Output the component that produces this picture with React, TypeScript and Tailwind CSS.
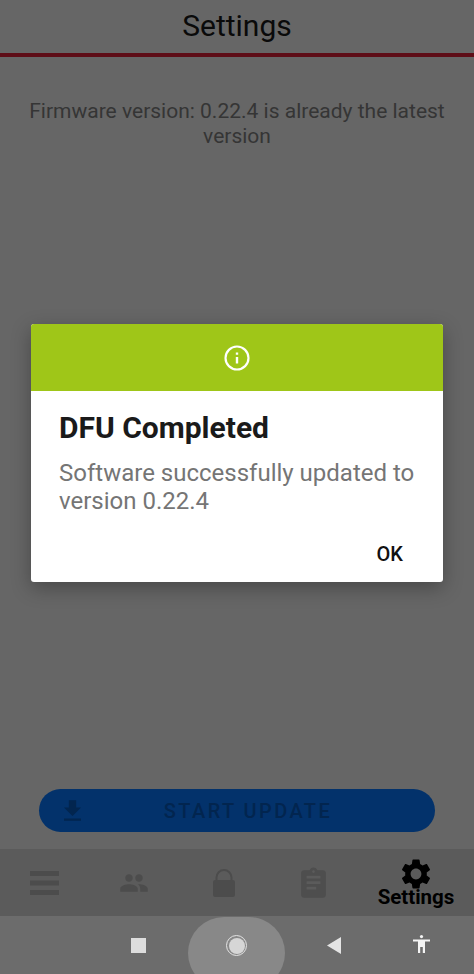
function HamburgerIcon() {
  return (
    <svg viewBox="0 0 29 24" className="w-[29px] h-[24px]" fill="#4c4c4c">
      <rect x="0" y="0" width="29" height="5" />
      <rect x="0" y="9.5" width="29" height="5" />
      <rect x="0" y="19" width="29" height="5" />
    </svg>
  );
}

function PeopleIcon() {
  return (
    <svg viewBox="0 0 24 24" className="w-[30px] h-[30px]" fill="#4c4c4c">
      <path d="M16 11c1.66 0 2.99-1.34 2.99-3S17.66 5 16 5c-1.66 0-3 1.34-3 3s1.34 3 3 3zm-8 0c1.66 0 2.99-1.34 2.99-3S9.66 5 8 5C6.34 5 5 6.34 5 8s1.34 3 3 3zm0 2c-2.33 0-7 1.17-7 3.5V19h14v-2.5c0-2.33-4.67-3.5-7-3.5zm8 0c-.29 0-.62.02-.97.05 1.16.84 1.97 1.97 1.97 3.45V19h6v-2.5c0-2.33-4.67-3.5-7-3.5z" />
    </svg>
  );
}

function LockIcon() {
  return (
    <svg viewBox="0 0 22 29" className="w-[22px] h-[29px]" fill="#4c4c4c">
      <path fillRule="evenodd" d="M2 29a2 2 0 0 1-2-2V14a2 2 0 0 1 2-2h.5V9.5a8.5 8.5 0 0 1 17 0V12h.5a2 2 0 0 1 2 2v13a2 2 0 0 1-2 2H2zM4.5 12h13V9.5a6.5 6.5 0 0 0-13 0V12z" />
    </svg>
  );
}

function ClipboardIcon() {
  return (
    <svg viewBox="0 0 24 24" className="w-[33px] h-[33px]" fill="#4e4e4e">
      <path d="M19 3h-4.18C14.4 1.84 13.3 1 12 1s-2.4.84-2.82 2H5c-1.1 0-2 .9-2 2v16c0 1.1.9 2 2 2h14c1.1 0 2-.9 2-2V5c0-1.1-.9-2-2-2zm-7 0c.55 0 1 .45 1 1s-.45 1-1 1-1-.45-1-1 .45-1 1-1zm2 14H7v-2h7v2zm3-4H7v-2h10v2zm0-4H7V7h10v2z" />
    </svg>
  );
}

function GearIcon() {
  return (
    <svg viewBox="0 0 24 24" className="w-[36px] h-[36px]" fill="#000000">
      <path d="M19.14 12.94c.04-.3.06-.61.06-.94 0-.32-.02-.64-.07-.94l2.03-1.58c.18-.14.23-.41.12-.61l-1.92-3.32c-.12-.22-.37-.29-.59-.22l-2.39.96c-.5-.38-1.03-.7-1.62-.94l-.36-2.54c-.04-.24-.24-.41-.48-.41h-3.84c-.24 0-.43.17-.47.41l-.36 2.54c-.59.24-1.13.57-1.62.94l-2.39-.96c-.22-.08-.47 0-.59.22L2.74 8.87c-.12.21-.08.47.12.61l2.03 1.58c-.05.3-.09.63-.09.94s.02.64.07.94l-2.03 1.58c-.18.14-.23.41-.12.61l1.92 3.32c.12.22.37.29.59.22l2.39-.96c.5.38 1.03.7 1.62.94l.36 2.54c.05.24.24.41.48.41h3.84c.24 0 .44-.17.47-.41l.36-2.54c.59-.24 1.13-.56 1.62-.94l2.39.96c.22.08.47 0 .59-.22l1.92-3.32c.12-.22.07-.47-.12-.61l-2.01-1.58zM12 15.6c-1.98 0-3.6-1.62-3.6-3.6s1.62-3.6 3.6-3.6 3.6 1.62 3.6 3.6-1.62 3.6-3.6 3.6z" />
    </svg>
  );
}

function DownloadIcon() {
  return (
    <svg viewBox="5 3 14 17" className="absolute left-[25px] top-[11px] w-[17px] h-[21px]" fill="#02254f">
      <path d="M19 9h-4V3H9v6H5l7 7 7-7zM5 18v2h14v-2H5z" />
    </svg>
  );
}

function InfoIcon() {
  return (
    <svg viewBox="0 0 24 24" className="w-[26px] h-[26px]" fill="none" stroke="#ffffff" strokeWidth="2">
      <circle cx="12" cy="12" r="10.6" />
      <path d="M12 11v6" strokeWidth="2.2" />
      <path d="M12 7v2" strokeWidth="2.2" />
    </svg>
  );
}

function AccessibilityIcon() {
  return (
    <svg viewBox="0 0 17 18" className="w-[17px] h-[18px]" fill="#f4f4f4">
      <circle cx="8.5" cy="1.6" r="1.6" />
      <path d="M0 4.5h17v2h-5V18h-2.2v-6H7.2v6H5V6.5H0z" />
    </svg>
  );
}

export default function App() {
  return (
    <div className="relative w-[474px] h-[974px] overflow-hidden flex flex-col bg-[#666666] font-['Roboto',sans-serif]">
      {/* Header */}
      <div className="h-[53px] pb-[3px] flex items-center justify-center text-[30px] text-[#0a0a0a]">Settings</div>
      <div className="h-[4px] bg-[#5e0d17]" />

      <div className="flex-1 flex flex-col">
        <p className="mt-[42px] px-[24px] text-center text-[21px] leading-[25px] text-[#353535]">
          Firmware version: 0.22.4 is already the latest version
        </p>
      </div>

      {/* Start update button */}
      <div className="px-[39px] pb-[17px]">
        <div className="relative h-[43px] rounded-[22px] bg-[#03326b] flex items-center justify-center pl-[22px] text-[#02254f] text-[20px] font-medium tracking-[2.4px]">
          <DownloadIcon />
          START UPDATE
        </div>
      </div>

      {/* Tab bar */}
      <div className="h-[67px] bg-[#5b5b5b] flex items-center">
        <div className="w-[89.5px] flex justify-center"><HamburgerIcon /></div>
        <div className="w-[89.5px] flex justify-center"><PeopleIcon /></div>
        <div className="w-[89.5px] flex justify-center"><LockIcon /></div>
        <div className="w-[89.5px] flex justify-center"><ClipboardIcon /></div>
        <div className="flex-1 self-start pt-[7px] flex flex-col items-center text-black text-[20.5px] leading-[20px] font-bold">
          <GearIcon />
          <span className="-mt-[5px]">Settings</span>
        </div>
      </div>

      {/* Android nav bar */}
      <div className="relative h-[58px] bg-[#6c6c6c]">
        <div className="absolute left-[188px] top-[1px] w-[97px] h-[72px] rounded-[36px] bg-[#888888]" />
        <div className="absolute left-[131px] top-[22px] w-[15px] h-[15px] bg-[#dddddd]" />
        <div className="absolute left-[226px] top-[19px] w-[21px] h-[21px] rounded-full border-[1.5px] border-[#e4e4e4] p-[1.5px]">
          <div className="w-full h-full rounded-full bg-[#d6d6d6]" />
        </div>
        <svg viewBox="0 0 14 17" className="absolute left-[327px] top-[21px] w-[14px] h-[17px]" fill="#e4e4e4">
          <path d="M14 0v17L0 8.5z" />
        </svg>
        <div className="absolute left-[413px] top-[19px] flex"><AccessibilityIcon /></div>
      </div>

      {/* Dialog */}
      <div className="absolute left-[31px] top-[324px] w-[412px] h-[258px] rounded-[3px] bg-white overflow-hidden shadow-[0_6px_20px_rgba(0,0,0,0.3)]">
        <div className="h-[67px] bg-[#9fc618] flex items-center justify-center">
          <InfoIcon />
        </div>
        <div className="px-[28px] pt-[19px]">
          <h2 className="text-[30px] leading-[36px] font-bold text-[#1a1a1a]">DFU Completed</h2>
          <p className="mt-[13px] text-[24px] leading-[28px] text-[#757575]">Software successfully updated to version 0.22.4</p>
        </div>
        <div className="absolute right-[40px] bottom-[13px] text-[20px] font-medium text-[#111111]">OK</div>
      </div>
    </div>
  );
}
